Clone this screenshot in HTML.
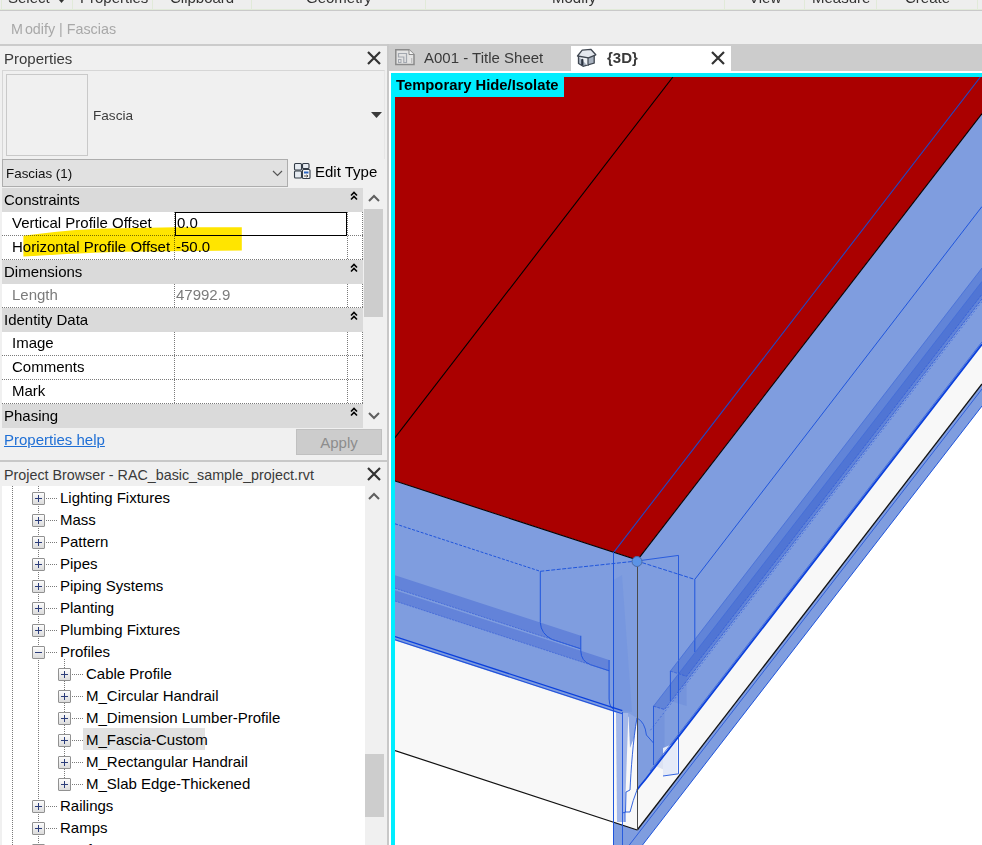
<!DOCTYPE html>
<html><head><meta charset="utf-8">
<style>
*{margin:0;padding:0;box-sizing:border-box}
html,body{width:982px;height:845px;overflow:hidden;background:#eeeeee;font-family:"Liberation Sans",sans-serif;color:#000;position:relative}
.a{position:absolute;white-space:nowrap}
.t15{font-size:15px;line-height:20px}
.t14{font-size:14px;line-height:20px}
.t13{font-size:13px;line-height:20px}
.hdr{position:absolute;left:2px;width:361px;height:24px;background:#dadada}
.row{position:absolute;left:2px;width:361px;height:24px;background:#fff}
.dh{position:absolute;height:1px;background-image:linear-gradient(to right,#7a7a7a 50%,transparent 50%);background-size:2px 1px}
.dv{position:absolute;width:1px;background-image:linear-gradient(to bottom,#7a7a7a 50%,transparent 50%);background-size:1px 2px}
.exp{position:absolute;width:13px;height:13px;border:1px solid #919191;border-radius:1px;background:linear-gradient(#fcfcfc,#dcdcdc)}
.exp:before{content:"";position:absolute;left:2px;top:5px;width:7px;height:1px;background:#2c3d7a}
.exp.p:after{content:"";position:absolute;left:5px;top:2px;width:1px;height:7px;background:#2c3d7a}
.ti{position:absolute;font-size:15px;line-height:22px;white-space:nowrap;color:#000}
</style></head><body>
<!-- ribbon -->
<div class="a" style="left:0;top:0;width:982px;height:9px;background:#eeeeee"></div>
<div class="a" style="left:0;top:9px;width:982px;height:1px;background:#e1ead9"></div>
<div class="a" style="left:0;top:10px;width:982px;height:1px;background:#c9c9c9"></div>
<div class="a t15" style="left:8px;top:-12px;color:#333">Select</div><svg class="a" style="left:59px;top:0" width="6" height="4"><path d="M0 0H5L2.5 3Z" fill="#333"/></svg>
<div class="a t15" style="left:80px;top:-12px;color:#333">Properties</div>
<div class="a t15" style="left:170px;top:-12px;color:#333">Clipboard</div>
<div class="a t15" style="left:306px;top:-12px;color:#333">Geometry</div>
<div class="a t15" style="left:552px;top:-12px;color:#333">Modify</div>
<div class="a t15" style="left:749px;top:-12px;color:#333">View</div>
<div class="a t15" style="left:812px;top:-12px;color:#333">Measure</div>
<div class="a t15" style="left:905px;top:-12px;color:#333">Create</div>
<div id="ribsep"><div class="a" style="left:1px;top:0;width:1px;height:9px;background:#e1ead9"></div><div class="a" style="left:72px;top:0;width:1px;height:9px;background:#e1ead9"></div><div class="a" style="left:152px;top:0;width:1px;height:9px;background:#e1ead9"></div><div class="a" style="left:251px;top:0;width:1px;height:9px;background:#e1ead9"></div><div class="a" style="left:425px;top:0;width:1px;height:9px;background:#e1ead9"></div><div class="a" style="left:724px;top:0;width:1px;height:9px;background:#e1ead9"></div><div class="a" style="left:804px;top:0;width:1px;height:9px;background:#e1ead9"></div><div class="a" style="left:876px;top:0;width:1px;height:9px;background:#e1ead9"></div><div class="a" style="left:977px;top:0;width:1px;height:9px;background:#e1ead9"></div></div>
<div class="a" style="left:11px;top:19px;font-size:14.3px;line-height:20px;color:#a8a8a8">M<span style="margin-left:2px">odify</span> | Fascias</div>
<div class="a" style="left:0;top:44px;width:387px;height:2px;background:#cbcbcb"></div>

<!-- properties panel -->
<div class="a" style="left:0;top:46px;width:387px;height:414px;background:#f0f0f0"></div>
<div class="a t15" style="left:4px;top:49px;color:#3a3a3a">Properties</div>
<svg class="a" style="left:366px;top:50px" width="16" height="16"><path d="M2 2L14 14M14 2L2 14" stroke="#333" stroke-width="2.2"/></svg>
<div class="a" style="left:2px;top:70px;width:383px;height:89px;border-top:1px solid #d6d6d6;border-left:1px solid #d6d6d6;border-right:1px solid #e6e6e6"></div>
<div class="a" style="left:6px;top:74px;width:82px;height:82px;border:1px solid #c9c9c9;background:#f0f0f0"></div>
<div class="a" style="left:93px;top:106px;font-size:13.6px;line-height:20px;color:#3c3c3c">Fascia</div>
<svg class="a" style="left:371px;top:112px" width="12" height="7"><path d="M0 0H11L5.5 6Z" fill="#3a3a3a"/></svg>
<div class="a" style="left:2px;top:159px;width:286px;height:28px;background:#e1e1e1;border:1px solid #adadad"></div>
<div class="a" style="left:6px;top:164px;font-size:13.4px;line-height:20px;color:#111">Fascias (1)</div>
<svg class="a" style="left:272px;top:170px" width="11" height="7"><path d="M1 1L5.5 5.5L10 1" stroke="#555" stroke-width="1.2" fill="none"/></svg>
<svg class="a" style="left:293px;top:162px" width="19" height="18" viewBox="293 162 19 18"><g stroke="#333c47" stroke-width="1.1" fill="#e6ebf1"><rect x="294.5" y="163.5" width="7" height="6.5" rx="1"/><rect x="302.5" y="163.5" width="6.5" height="5" rx="1"/><rect x="294.5" y="171" width="7" height="7" rx="1"/><rect x="302.5" y="169.5" width="7.5" height="9" rx="1" fill="#f7f7f7"/></g><rect x="304" y="171.5" width="4.5" height="2" fill="#2b64c0"/><path d="M304 176H308M306.5 174.8L308 176L306.5 177.2" stroke="#444" stroke-width="0.9" fill="none"/></svg>
<div class="a t15" style="left:315px;top:162px;color:#000">Edit Type</div>

<!-- grid -->
<div class="hdr" style="top:188px"></div>
<div class="a t15" style="left:4px;top:190px">Constraints</div>
<div class="row" style="top:212px"></div>
<div class="a t15" style="left:12px;top:213px">Vertical Profile Offset</div>
<div class="row" style="top:236px"></div>
<div class="a t15" style="left:12px;top:237px">Horizontal Profile Offset</div>
<div class="hdr" style="top:260px"></div>
<div class="a t15" style="left:4px;top:262px">Dimensions</div>
<div class="row" style="top:284px"></div>
<div class="a t15" style="left:12px;top:285px;color:#7b7b7b">Length</div>
<div class="a t15" style="left:176px;top:285px;color:#7b7b7b">47992.9</div>
<div class="hdr" style="top:308px"></div>
<div class="a t15" style="left:4px;top:310px">Identity Data</div>
<div class="row" style="top:332px"></div>
<div class="a t15" style="left:12px;top:333px">Image</div>
<div class="row" style="top:356px"></div>
<div class="a t15" style="left:12px;top:357px">Comments</div>
<div class="row" style="top:380px"></div>
<div class="a t15" style="left:12px;top:381px">Mark</div>
<div class="hdr" style="top:404px"></div>
<div class="a t15" style="left:4px;top:406px">Phasing</div>
<div id="gridlines"><div class="dv" style="left:174px;top:212px;height:48px"></div>
<div class="dv" style="left:347px;top:212px;height:48px"></div>
<div class="dv" style="left:362px;top:212px;height:48px"></div>
<div class="dv" style="left:174px;top:284px;height:24px"></div>
<div class="dv" style="left:347px;top:284px;height:24px"></div>
<div class="dv" style="left:362px;top:284px;height:24px"></div>
<div class="dv" style="left:174px;top:332px;height:72px"></div>
<div class="dv" style="left:347px;top:332px;height:72px"></div>
<div class="dv" style="left:362px;top:332px;height:72px"></div>
<div class="dh" style="left:2px;top:235px;width:361px"></div>
<div class="dh" style="left:2px;top:259px;width:361px"></div>
<div class="dh" style="left:2px;top:307px;width:361px"></div>
<div class="dh" style="left:2px;top:355px;width:361px"></div>
<div class="dh" style="left:2px;top:379px;width:361px"></div>
<div class="dh" style="left:2px;top:403px;width:361px"></div></div>
<div class="a" style="left:175px;top:212px;width:172px;height:24px;border:1.5px solid #000;background:#fff"></div>
<div class="a t15" style="left:177px;top:213px">0.0</div>
<div class="a t15" style="left:176px;top:237px">-50.0</div>
<svg class="a" style="left:0;top:0;mix-blend-mode:multiply" width="250" height="265" viewBox="0 0 250 265"><path d="M23.4 235.8 C50 232 80 229 107.8 228.4 L176 227.2 L241.8 227.2 L241.8 250.5 L120 251.7 C80 253 50 255 23.4 256.6Z" fill="#ffe500"/></svg>
<div id="chev"><svg class="a" style="left:350px;top:191px" width="8" height="10"><path d="M1 4.5L4 1.5L7 4.5M1 8.5L4 5.5L7 8.5" stroke="#000" stroke-width="1.6" fill="none"/></svg>
<svg class="a" style="left:350px;top:263px" width="8" height="10"><path d="M1 4.5L4 1.5L7 4.5M1 8.5L4 5.5L7 8.5" stroke="#000" stroke-width="1.6" fill="none"/></svg>
<svg class="a" style="left:350px;top:311px" width="8" height="10"><path d="M1 4.5L4 1.5L7 4.5M1 8.5L4 5.5L7 8.5" stroke="#000" stroke-width="1.6" fill="none"/></svg>
<svg class="a" style="left:350px;top:407px" width="8" height="10"><path d="M1 4.5L4 1.5L7 4.5M1 8.5L4 5.5L7 8.5" stroke="#000" stroke-width="1.6" fill="none"/></svg></div>
<!-- scrollbar -->
<svg class="a" style="left:367px;top:194px" width="14" height="9"><path d="M2 7L7 2L12 7" stroke="#5f5f5f" stroke-width="2" fill="none"/></svg>
<div class="a" style="left:364px;top:209px;width:19px;height:108px;background:#cdcdcd"></div>
<svg class="a" style="left:367px;top:411px" width="14" height="9"><path d="M2 2L7 7L12 2" stroke="#5f5f5f" stroke-width="2" fill="none"/></svg>
<div class="a" style="left:4px;top:430px;font-size:15px;line-height:20px;color:#1f6fd5;text-decoration:underline;white-space:nowrap">Properties help</div>
<div class="a" style="left:296px;top:429px;width:86px;height:26px;background:#cccccc;border:1px solid #c0c0c0"></div>
<div class="a t15" style="left:296px;top:433px;width:86px;text-align:center;color:#8d8d8d">Apply</div>
<div class="a" style="left:0;top:460px;width:387px;height:2px;background:#c8c8c8"></div>

<!-- project browser -->
<div class="a" style="left:0;top:462px;width:387px;height:383px;background:#f0f0f0"></div>
<div class="a" style="left:4px;top:465px;font-size:14.3px;line-height:20px;color:#3a3a3a">Project Browser - RAC_basic_sample_project.rvt</div>
<svg class="a" style="left:366px;top:466px" width="16" height="16"><path d="M2 2L14 14M14 2L2 14" stroke="#333" stroke-width="2.2"/></svg>
<div class="a" style="left:2px;top:486px;width:363px;height:359px;background:#fff"></div>
<div id="tree"><div class="dv" style="left:12px;top:486px;height:359px"></div>
<div class="dv" style="left:38px;top:486px;height:359px"></div>
<div class="dv" style="left:64px;top:659px;height:126px"></div>
<div class="a" style="left:83px;top:728px;width:122px;height:22px;background:#e1e1e1"></div>
<div class="dh" style="left:46px;top:498px;width:12px"></div>
<div class="exp p" style="left:32px;top:492px"></div>
<div class="ti" style="left:60px;top:487px">Lighting Fixtures</div>
<div class="dh" style="left:46px;top:520px;width:12px"></div>
<div class="exp p" style="left:32px;top:514px"></div>
<div class="ti" style="left:60px;top:509px">Mass</div>
<div class="dh" style="left:46px;top:542px;width:12px"></div>
<div class="exp p" style="left:32px;top:536px"></div>
<div class="ti" style="left:60px;top:531px">Pattern</div>
<div class="dh" style="left:46px;top:564px;width:12px"></div>
<div class="exp p" style="left:32px;top:558px"></div>
<div class="ti" style="left:60px;top:553px">Pipes</div>
<div class="dh" style="left:46px;top:586px;width:12px"></div>
<div class="exp p" style="left:32px;top:580px"></div>
<div class="ti" style="left:60px;top:575px">Piping Systems</div>
<div class="dh" style="left:46px;top:608px;width:12px"></div>
<div class="exp p" style="left:32px;top:602px"></div>
<div class="ti" style="left:60px;top:597px">Planting</div>
<div class="dh" style="left:46px;top:630px;width:12px"></div>
<div class="exp p" style="left:32px;top:624px"></div>
<div class="ti" style="left:60px;top:619px">Plumbing Fixtures</div>
<div class="dh" style="left:46px;top:652px;width:12px"></div>
<div class="exp m" style="left:32px;top:646px"></div>
<div class="ti" style="left:60px;top:641px">Profiles</div>
<div class="dh" style="left:72px;top:674px;width:12px"></div>
<div class="exp p" style="left:58px;top:668px"></div>
<div class="ti" style="left:86px;top:663px">Cable Profile</div>
<div class="dh" style="left:72px;top:696px;width:12px"></div>
<div class="exp p" style="left:58px;top:690px"></div>
<div class="ti" style="left:86px;top:685px">M_Circular Handrail</div>
<div class="dh" style="left:72px;top:718px;width:12px"></div>
<div class="exp p" style="left:58px;top:712px"></div>
<div class="ti" style="left:86px;top:707px">M_Dimension Lumber-Profile</div>
<div class="dh" style="left:72px;top:740px;width:12px"></div>
<div class="exp p" style="left:58px;top:734px"></div>
<div class="ti" style="left:86px;top:729px">M_Fascia-Custom</div>
<div class="dh" style="left:72px;top:762px;width:12px"></div>
<div class="exp p" style="left:58px;top:756px"></div>
<div class="ti" style="left:86px;top:751px">M_Rectangular Handrail</div>
<div class="dh" style="left:72px;top:784px;width:12px"></div>
<div class="exp p" style="left:58px;top:778px"></div>
<div class="ti" style="left:86px;top:773px">M_Slab Edge-Thickened</div>
<div class="dh" style="left:46px;top:806px;width:12px"></div>
<div class="exp p" style="left:32px;top:800px"></div>
<div class="ti" style="left:60px;top:795px">Railings</div>
<div class="dh" style="left:46px;top:828px;width:12px"></div>
<div class="exp p" style="left:32px;top:822px"></div>
<div class="ti" style="left:60px;top:817px">Ramps</div>
<div class="dh" style="left:46px;top:850px;width:12px"></div>
<div class="exp p" style="left:32px;top:844px"></div>
<div class="ti" style="left:60px;top:839px">Roofs</div></div>
<svg class="a" style="left:367px;top:492px" width="14" height="9"><path d="M2 7L7 2L12 7" stroke="#5f5f5f" stroke-width="2" fill="none"/></svg>
<div class="a" style="left:365px;top:754px;width:19px;height:63px;background:#cdcdcd"></div>

<!-- splitter -->
<div class="a" style="left:387px;top:44px;width:2px;height:801px;background:#c8c8c8"></div>

<!-- tab bar -->
<div class="a" style="left:389px;top:44px;width:593px;height:27px;background:#cccccc"></div>
<div class="a t15" style="left:424px;top:48px;color:#3a3a3a">A001 - Title Sheet</div>

<div class="a" style="left:571px;top:46px;width:160px;height:26px;background:#fff"></div>
<div class="a" style="left:607px;top:48px;font-size:15px;line-height:20px;font-weight:bold;color:#3a3a3a;letter-spacing:0px">{3D}</div>
<svg class="a" style="left:710px;top:50px" width="16" height="16"><path d="M2 2L14 14M14 2L2 14" stroke="#333" stroke-width="2.2"/></svg>

<!--ICONS--><svg class="a" style="left:394px;top:48px" width="22" height="19" viewBox="394 48 22 19"><path d="M395.8 49.8H409L414 54.5V64.4H395.8Z" fill="#e3e3e3" stroke="#8a8a8a" stroke-width="1.5"/><path d="M409 49.8V54.5H414" fill="#f4f4f4" stroke="#8a8a8a" stroke-width="1"/><path d="M398.5 53.5H406.5V62.5H403.8V57H398.5Z" fill="none" stroke="#a3a8b0" stroke-width="1.2"/><rect x="398.5" y="59.5" width="2.5" height="3" fill="none" stroke="#a3a8b0" stroke-width="1"/><path d="M411.7 58V63" stroke="#b9b9b9" stroke-width="1.2"/></svg>
<svg class="a" style="left:576px;top:48px" width="22" height="20" viewBox="576 48 22 20"><path d="M578.5 56.5V63.5L583.2 66.3L594.2 63V55.5" fill="#a9b2bf" stroke="#3f4650" stroke-width="1.3"/><path d="M578.5 56.5L583 51.8L588 57V66" fill="#eef1f5" stroke="#3f4650" stroke-width="1.2"/><path d="M577.5 56L582.2 50.2L590.8 49.3L595.8 54.8L588.5 57.8Z" fill="#e4e8ee" stroke="#3f4650" stroke-width="1.3" stroke-linejoin="round"/><path d="M581.2 65V59.5Q582.2 57.8 583.4 59.5V65.5" fill="#2b3340"/></svg>
<!--/ICONS-->
<!-- viewport -->
<div class="a" style="left:389px;top:71px;width:593px;height:774px;background:#fff"></div>
<div id="view" class="a" style="left:391px;top:73px;width:591px;height:772px;background:#00eeff"></div>
<!--VIEW--><svg class="a" style="left:395px;top:77px" width="587" height="768" viewBox="395 77 587 768"><defs><linearGradient id="cs" x1="0" y1="0" x2="0" y2="1"><stop offset="0" stop-color="#7f9ddf"/><stop offset="1" stop-color="#6e90de"/></linearGradient></defs><rect x="395" y="77" width="587" height="768" fill="#fff"/><polygon points="395.0,77.0 982.0,77.0 982.0,113.7 637.4,560.1 395.0,481.0" fill="#aa0000" /><polygon points="395.0,640.5 637.0,719.4 637.0,830.0 395.0,750.6" fill="#f8f8f8" /><polygon points="637.0,790.0 646.0,779.0 982.0,344.3 982.0,384.0 637.2,830.0" fill="#f8f8f8" /><polygon points="625.7,845.0 982.0,384.3 982.0,406.0 642.5,845.0" fill="#7f9ddf" /><polygon points="613.4,821.8 637.2,830.0 629.7,845.0 613.4,845.0" fill="#7f9ddf" /><polygon points="395.0,481.0 637.4,560.1 637.0,719.4 395.0,640.5" fill="#7f9ddf" /><polygon points="395.0,575.2 580.8,635.8 580.8,648.8 552.0,639.4 395.0,588.2" fill="#6383d9" /><polygon points="395.0,590.2 609.1,660.0 609.1,670.8 590.4,664.7 395.0,601.0" fill="#6383d9" /><polygon points="637.4,560.1 982.0,113.7 982.0,344.3 646.0,779.0 637.0,790.0" fill="#7f9ddf" /><polygon points="670.4,671.1 982.0,268.0 982.0,294.3 686.6,676.3" fill="#3a62d0" fill-opacity="0.42"/><polygon points="653.5,706.2 982.0,281.4 982.0,299.0 664.5,709.5" fill="#3a62d0" fill-opacity="0.42"/><polygon points="670.4,671.1 686.6,676.3 686.6,706.0 670.4,701.0" fill="#3a62d0" fill-opacity="0.15"/><polygon points="653.5,706.2 664.5,709.5 664.5,770.0 653.5,765.0" fill="#3a62d0" fill-opacity="0.15"/><polygon points="613.4,552.3 637.4,560.1 637.0,830.0 613.4,822.0" fill="#7f9ddf" /><polygon points="613.4,711.7 637.0,719.4 637.0,830.0 613.4,821.8" fill="#f8f8f8" /><polygon points="616.0,713.0 628.4,713.0 624.6,822.0 617.0,822.0" fill="#a3b7e9" /><polygon points="628.4,713.0 637.0,718.0 634.0,738.0 630.0,748.0" fill="#8ea8e4" /><polygon points="613.6,580.0 622.0,575.0 632.0,712.0 614.0,711.0" fill="#7596de" opacity="0.8"/><polygon points="663.0,748.0 677.4,742.0 677.4,774.5 663.0,776.0" fill="#e4eaf8" /><line x1="672.9" y1="77.0" x2="395.0" y2="437.7" stroke="#000" stroke-width="1.1" /><line x1="980.4" y1="77.0" x2="613.3" y2="552.8" stroke="#1f48c8" stroke-width="1.1" /><line x1="982.0" y1="113.7" x2="637.4" y2="560.1" stroke="#000" stroke-width="1.1" /><line x1="395.0" y1="481.0" x2="637.4" y2="560.1" stroke="#000" stroke-width="1.1" /><line x1="395.0" y1="750.6" x2="637.2" y2="830.0" stroke="#111" stroke-width="1.2" /><line x1="982.0" y1="384.0" x2="637.2" y2="830.0" stroke="#111" stroke-width="1.3" /><line x1="982.0" y1="389.0" x2="629.3" y2="845.0" stroke="#2f5fdc" stroke-width="1" /><line x1="982.0" y1="406.0" x2="642.5" y2="845.0" stroke="#1f55dc" stroke-width="1" /><line x1="613.5" y1="552.0" x2="613.5" y2="845.0" stroke="#1f55dc" stroke-width="1" /><line x1="622.5" y1="712.0" x2="622.5" y2="845.0" stroke="#1f55dc" stroke-width="0.9" /><line x1="395.0" y1="523.8" x2="540.3" y2="571.3" stroke="#1f55dc" stroke-width="1" stroke-dasharray="3,1.5"/><line x1="540.3" y1="571.3" x2="637.0" y2="561.0" stroke="#1f55dc" stroke-width="1" stroke-dasharray="4,1.5"/><line x1="637.0" y1="561.0" x2="694.8" y2="579.4" stroke="#1f55dc" stroke-width="1" stroke-dasharray="4,1.5"/><polyline points="637.0,561.0 678.5,555.4 678.5,773.8 663.0,776.0" fill="none" stroke="#1f55dc" stroke-width="0.9" /><line x1="694.8" y1="579.4" x2="694.8" y2="652.0" stroke="#1f55dc" stroke-width="1" /><line x1="694.8" y1="579.4" x2="982.0" y2="206.5" stroke="#1f55dc" stroke-width="1" /><path d="M540.3 571.3 V622.5 Q541 634 552 639.4 L580.8 648.8 M580.8 635.8 V651 Q581 661 590.4 664.7 L609.1 670.8 M609.1 660.0 V699 Q609.5 708 613.8 709" fill="none" stroke="#1f55dc" stroke-width="1"/><line x1="395.0" y1="588.2" x2="580.8" y2="648.8" stroke="#3f66d8" stroke-width="0.8" stroke-dasharray="2,1"/><line x1="395.0" y1="601.0" x2="609.1" y2="670.8" stroke="#3f66d8" stroke-width="0.8" stroke-dasharray="2,1"/><line x1="982.0" y1="268.0" x2="670.4" y2="671.1" stroke="#3f6ad8" stroke-width="0.7" /><line x1="982.0" y1="281.4" x2="653.5" y2="706.2" stroke="#3f6ad8" stroke-width="0.7" /><polyline points="670.4,671.1 686.6,676.3 982.0,294.3" fill="none" stroke="#2e5ad8" stroke-width="0.7" stroke-dasharray="3,1"/><polyline points="653.5,706.2 664.5,709.5 982.0,299.0" fill="none" stroke="#2e5ad8" stroke-width="0.8" stroke-dasharray="3,1"/><line x1="982.0" y1="301.5" x2="650.0" y2="730.8" stroke="#2e5ad8" stroke-width="0.6" stroke-dasharray="2,2"/><line x1="670.4" y1="671.1" x2="670.4" y2="701.0" stroke="#1f55dc" stroke-width="0.9" /><line x1="653.5" y1="706.2" x2="653.5" y2="765.0" stroke="#1f55dc" stroke-width="0.9" /><path d="M637 718 Q645 722 646.4 735 L653.5 743 M637 790 Q633 800 630 812 L625 812 V822" fill="none" stroke="#1f55dc" stroke-width="0.9"/><path d="M637 718 C633 740 631 770 630 790 L626 792 L625.5 812 L622.5 813" fill="none" stroke="#1f55dc" stroke-width="0.9"/><line x1="395.0" y1="636.5" x2="622.3" y2="710.6" stroke="#0b40dc" stroke-width="1.3" /><line x1="395.0" y1="639.7" x2="622.3" y2="713.8" stroke="#1f4fdc" stroke-width="1.1" /><polyline points="982.0,344.3 646.0,778.7 640.0,786.0 637.0,790.0" fill="none" stroke="#0b40dc" stroke-width="1.8" /><line x1="982.0" y1="341.8" x2="650.0" y2="771.1" stroke="#3d68dc" stroke-width="0.9" /><line x1="637.5" y1="561.0" x2="637.5" y2="830.0" stroke="#4a4a4a" stroke-width="1" /><circle cx="637" cy="561.5" r="5" fill="#5b93e6" stroke="#4a6aa8" stroke-width="1"/></svg><div class="a" style="left:391px;top:73px;width:173px;height:24px;background:#00eeff"></div><div class="a" style="left:396px;top:75px;font-size:14.8px;line-height:20px;font-weight:bold;color:#000">Temporary Hide/Isolate</div><!--/VIEW-->
</body></html>
